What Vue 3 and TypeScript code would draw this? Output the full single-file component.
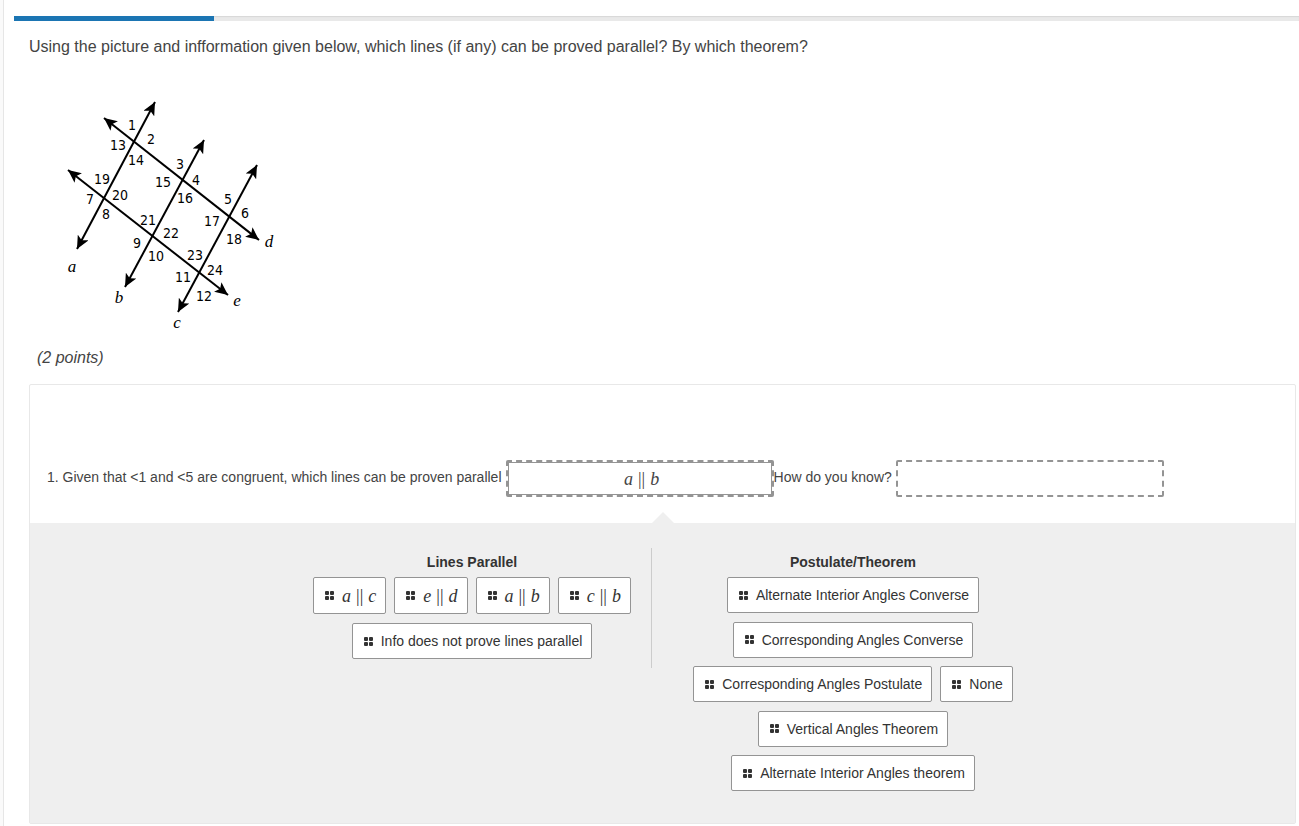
<script setup lang="ts">
import { ref } from 'vue'

interface Tile {
  id: string
  text?: string
  math?: [string, string]
}

interface Label {
  text: string
  x: number
  y: number
}

const segments: number[][] = [
  [77, 249, 155, 102],
  [125, 287, 204, 140],
  [178, 312, 257, 165],
  [104, 118, 259, 240],
  [68, 170, 228, 295],
]

const angles: Label[] = [
  { text: '1', x: 132, y: 130 },
  { text: '2', x: 151, y: 144 },
  { text: '3', x: 180, y: 169 },
  { text: '4', x: 196, y: 185 },
  { text: '5', x: 228, y: 204 },
  { text: '6', x: 245, y: 218 },
  { text: '7', x: 90, y: 204 },
  { text: '8', x: 106, y: 219 },
  { text: '9', x: 137, y: 248 },
  { text: '10', x: 156, y: 261 },
  { text: '11', x: 183, y: 282 },
  { text: '12', x: 204, y: 301 },
  { text: '13', x: 118, y: 150 },
  { text: '14', x: 136, y: 165 },
  { text: '15', x: 163, y: 187 },
  { text: '16', x: 185, y: 203 },
  { text: '17', x: 212, y: 226 },
  { text: '18', x: 234, y: 244 },
  { text: '19', x: 102, y: 184 },
  { text: '20', x: 120, y: 200 },
  { text: '21', x: 148, y: 225 },
  { text: '22', x: 171, y: 238 },
  { text: '23', x: 195, y: 260 },
  { text: '24', x: 215, y: 275 },
]

const names: Label[] = [
  { text: 'a', x: 72, y: 272 },
  { text: 'b', x: 119, y: 303 },
  { text: 'c', x: 177, y: 328 },
  { text: 'd', x: 269, y: 247 },
  { text: 'e', x: 237, y: 306 },
]

const lineTiles: Tile[] = [
  { id: 'ac', math: ['a', 'c'] },
  { id: 'ed', math: ['e', 'd'] },
  { id: 'ab', math: ['a', 'b'] },
  { id: 'cb', math: ['c', 'b'] },
  { id: 'none-parallel', text: 'Info does not prove lines parallel' },
]

const theoremTiles: Tile[] = [
  { id: 'aiac', text: 'Alternate Interior Angles Converse' },
  { id: 'cac', text: 'Corresponding Angles Converse' },
  { id: 'cap', text: 'Corresponding Angles Postulate' },
  { id: 'none', text: 'None' },
  { id: 'vat', text: 'Vertical Angles Theorem' },
  { id: 'aiat', text: 'Alternate Interior Angles theorem' },
]

const groups = [
  { title: 'Lines Parallel', tiles: lineTiles },
  { title: 'Postulate/Theorem', tiles: theoremTiles },
]

const answer = ref<[string, string]>(['a', 'b'])
</script>

<template>
  <main class="page">
    <div class="progress"><div class="progress-fill"></div></div>

    <section class="question">
      <p class="prompt">
        Using the picture and infformation given below, which lines (if any) can be proved parallel? By which theorem?
      </p>

      <svg class="diagram" width="260" height="250" viewBox="29 90 260 250" aria-hidden="true">
        <defs>
          <marker
            id="arrow"
            markerUnits="userSpaceOnUse"
            markerWidth="14"
            markerHeight="12"
            refX="13"
            refY="6"
            orient="auto-start-reverse"
          >
            <path d="M13 6 L0 0 L3 6 L0 12 Z" fill="#000" />
          </marker>
        </defs>
        <line
          v-for="(s, i) in segments"
          :key="i"
          class="ray"
          :x1="s[0]"
          :y1="s[1]"
          :x2="s[2]"
          :y2="s[3]"
          marker-start="url(#arrow)"
          marker-end="url(#arrow)"
        />
        <text v-for="l in angles" :key="l.text" class="angle" :x="l.x" :y="l.y">{{ l.text }}</text>
        <text v-for="l in names" :key="l.text" class="name" :x="l.x" :y="l.y">{{ l.text }}</text>
      </svg>

      <p class="points">(2 points)</p>

      <div class="card">
        <div class="sentence">
          <span class="before">1. Given that &lt;1 and &lt;5 are congruent, which lines can be proven parallel</span>
          <button type="button" class="drop">
            <span class="placed">
              <span class="math"><i>{{ answer[0] }}</i><span class="par">||</span><i>{{ answer[1] }}</i></span>
            </span>
          </button>
          <span class="before">How do you know?</span>
          <button type="button" class="drop" aria-label="Postulate/Theorem"></button>
        </div>

        <div class="bank">
          <div v-for="g in groups" :key="g.title" class="group">
            <h2 class="title">{{ g.title }}</h2>
            <div class="tiles">
              <button
                v-for="t in g.tiles"
                :key="t.id"
                type="button"
                class="tile"
                :class="{ 'tile-math': t.math }"
              >
                <svg class="grip" width="9" height="9" viewBox="0 0 9 9" aria-hidden="true">
                  <g fill="#333">
                    <rect width="4" height="4" rx="1" />
                    <rect x="5" width="4" height="4" rx="1" />
                    <rect y="5" width="4" height="4" rx="1" />
                    <rect x="5" y="5" width="4" height="4" rx="1" />
                  </g>
                </svg>
                <span v-if="t.math" class="math"><i>{{ t.math[0] }}</i><span class="par">||</span><i>{{ t.math[1] }}</i></span>
                <span v-else>{{ t.text }}</span>
              </button>
            </div>
          </div>
        </div>
      </div>
    </section>
  </main>
</template>

<style>
body {
  margin: 0;
  background: #fafafa;
}
</style>

<style scoped>
.page {
  box-sizing: border-box;
  min-height: 100vh;
  margin-left: 3px;
  padding: 16px 0 1px 10px;
  border-left: 1px solid #e6e6e6;
  background: #fff;
  color: #444;
  font-family: "Liberation Sans", Arial, sans-serif;
  font-size: 14px;
}

.progress {
  box-sizing: border-box;
  height: 5px;
  background: #e9e9e9;
  box-shadow: inset 0 1px 1px #d8d8d8;
}

.progress-fill {
  width: 200px;
  height: 5px;
  background: #1b75b3;
}

.question {
  padding: 16px 3px 0 15px;
}

.prompt {
  margin: 0 0 33px;
  font-size: 16px;
  line-height: 20px;
}

.diagram {
  display: block;
}

.ray {
  stroke: #000;
  stroke-width: 2;
}

.angle {
  fill: #000;
  font-family: "DejaVu Sans Condensed", "DejaVu Sans", sans-serif;
  font-size: 14px;
  text-anchor: middle;
}

.name {
  fill: #000;
  font-family: "Liberation Serif", "Times New Roman", serif;
  font-size: 17px;
  font-style: italic;
  text-anchor: middle;
}

.points {
  margin: 8px 0 16px 8px;
  font-size: 16px;
  font-style: italic;
  line-height: 20px;
}

.card {
  border: 1px solid #e8e8e8;
  border-radius: 2px;
}

.sentence {
  display: flex;
  align-items: center;
  padding: 75px 17px 26px;
}

.before {
  padding-bottom: 4px;
  white-space: nowrap;
}

.drop {
  box-sizing: border-box;
  display: flex;
  width: 268px;
  height: 37px;
  margin-left: 4px;
  padding: 0;
  border: 2px dashed #949494;
  border-radius: 2px;
  background: #fff;
  color: #444;
  font: inherit;
}

.placed {
  display: flex;
  flex: 1;
  align-self: stretch;
  align-items: center;
  justify-content: center;
  border: 1px solid #949494;
  padding-left: 4px;
}

.bank {
  position: relative;
  display: flex;
  align-items: flex-start;
  justify-content: center;
  box-sizing: border-box;
  min-height: 300px;
  padding: 25px 20px 23px;
  background: #efefef;
  color: #333;
}

.bank::before {
  content: "";
  position: absolute;
  top: -11px;
  left: 50%;
  margin-left: -11px;
  border: solid transparent;
  border-width: 0 11px 11px;
  border-bottom-color: #efefef;
}

.group {
  width: 322px;
  padding-bottom: 9px;
}

.group:first-child {
  padding-right: 18px;
  border-right: 1px solid #ccc;
}

.group:last-child {
  padding-left: 40px;
}

.group:last-child .tiles {
  min-height: 214px;
  row-gap: 8px;
}

.title {
  margin: 0;
  padding: 2px 0 3px;
  font-size: 14px;
  font-weight: bold;
  line-height: 24px;
  text-align: center;
}

.tiles {
  display: flex;
  flex-wrap: wrap;
  align-content: space-between;
  justify-content: center;
  gap: 9px 8px;
}

.tile {
  box-sizing: border-box;
  display: flex;
  align-items: center;
  gap: 8px;
  height: 36px;
  padding: 0 9px 0 11px;
  border: 1px solid #949494;
  border-radius: 2px;
  background: #fff;
  color: #333;
  font: inherit;
  white-space: nowrap;
}

.tile-math {
  height: 37px;
}

.math {
  display: inline-flex;
  align-items: center;
  gap: 5px;
  font-family: "Liberation Serif", "Times New Roman", serif;
  font-size: 18px;
  line-height: 20px;
}
</style>
